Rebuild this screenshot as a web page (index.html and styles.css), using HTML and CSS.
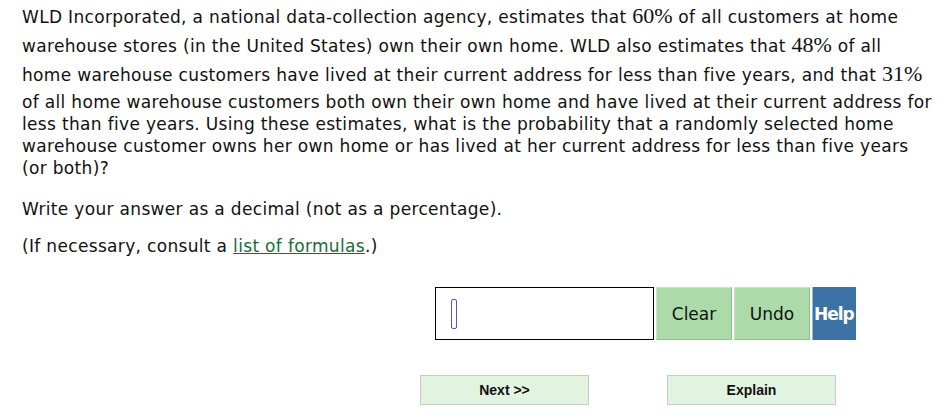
FILE: index.html
```html
<!DOCTYPE html>
<html>
<head>
<meta charset="utf-8">
<link rel="stylesheet" href="styles.css">
</head>
<body>
<div class="page">
  <p class="q">WLD Incorporated, a national data-collection agency, estimates that <span class="m">60%</span> of all customers at home warehouse stores (in the United States) own their own home. WLD also estimates that <span class="m">48%</span> of all home warehouse customers have lived at their current address for less than five years, and that <span class="m">31%</span> of all home warehouse customers both own their own home and have lived at their current address for less than five years. Using these estimates, what is the probability that a randomly selected home warehouse customer owns her own home or has lived at her current address for less than five years (or both)?</p>
  <p class="inst">Write your answer as a decimal (not as a percentage).</p>
  <p class="inst2">(If necessary, consult a <a class="link" href="#">list of formulas</a>.)</p>
  <div class="answer-row">
    <div class="input-box"><span class="caret"></span></div>
    <button class="btn-g">Clear</button>
    <button class="btn-g undo">Undo</button>
    <button class="btn-help">Help</button>
  </div>
  <div class="nav-row">
    <button class="btn-nav">Next &gt;&gt;</button>
    <button class="btn-nav">Explain</button>
  </div>
</div>
</body>
</html>
```

FILE: styles.css
```css
html, body {
  margin: 0;
  padding: 0;
  background: #fff;
}
.page {
  padding: 4px 0 0 22px;
  width: 913px;
  font-family: "DejaVu Sans", Verdana, sans-serif;
  font-size: 17px;
  color: #111;
}
.q {
  margin: 0;
  line-height: 22px;
  letter-spacing: 0.33px;
}
.m {
  display: inline-block;
  font-family: "Liberation Serif", "Times New Roman", serif;
  font-size: 22px;
  letter-spacing: 0;
  line-height: 22px;
  padding: 1px 0 6px;
}
.inst {
  margin: 19px 0 0;
  line-height: 22px;
  letter-spacing: 0.33px;
}
.inst2 {
  margin: 15px 0 0;
  line-height: 22px;
  letter-spacing: 0.33px;
}
.link {
  color: #1a6a3a;
  text-decoration: underline;
}
.answer-row {
  display: flex;
  align-items: stretch;
  margin: 30px 0 0 413px;
  height: 53px;
}
.input-box {
  box-sizing: border-box;
  width: 219px;
  border: 1px solid #000;
  background: #fff;
  display: flex;
  align-items: center;
  padding-left: 15px;
}
.caret {
  display: block;
  width: 4px;
  height: 28px;
  border: 1px solid #5555cc;
  border-radius: 2px;
}
button {
  font-family: inherit;
  margin: 0;
  cursor: pointer;
}
.btn-g {
  box-sizing: border-box;
  width: 76px;
  margin-left: 2px;
  background: #acdba9;
  border: 1px solid #c6e6c4;
  border-right-color: #8fbf8d;
  border-bottom-color: #8fbf8d;
  font-size: 17px;
  color: #111;
  padding: 0;
}
.btn-g.undo {
  margin-left: 2px;
}
.btn-help {
  box-sizing: border-box;
  width: 44px;
  margin-left: 2px;
  background: #3d72a4;
  border: none;
  border-left: 1px solid #9cb8d4;
  color: #fff;
  font-weight: bold;
  font-size: 17px;
  letter-spacing: -1px;
  padding: 0 0 0 1px;
  text-align: left;
  overflow: visible;
  white-space: nowrap;
}
.nav-row {
  display: flex;
  margin: 35px 0 0 398px;
  gap: 78px;
}
.btn-nav {
  box-sizing: border-box;
  width: 169px;
  height: 30px;
  background: #e0f4e0;
  border: 1px solid #c4cfc4;
  font-family: "Liberation Sans", Arial, sans-serif;
  font-weight: bold;
  font-size: 14px;
  color: #111;
  padding: 0;
}
```
